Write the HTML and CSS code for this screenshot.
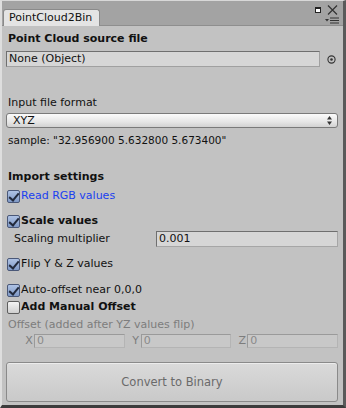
FILE: index.html
```html
<!DOCTYPE html>
<html>
<head>
<meta charset="utf-8">
<link rel="stylesheet" href="styles.css">
</head>
<body>
<div class="window">
  <div class="tabbar">
    <div class="tab">PointCloud2Bin</div>
    <div class="winicons">
      <svg class="maxic" width="6" height="6" viewBox="0 0 6 6"><rect x="0.5" y="0.5" width="5" height="5" fill="#fff" stroke="#222"/><rect x="0" y="0" width="6" height="2" fill="#222"/></svg>
      <svg class="closeic" width="11" height="10" viewBox="0 0 11 10"><path d="M1 0.5 L10 9.5 M10 0.5 L1 9.5" stroke="#333" stroke-width="1.2" fill="none"/></svg>
      <svg class="menuic" width="14" height="7" viewBox="0 0 14 7"><path d="M0 2 L4 2 L2 4.5 Z" fill="#333"/><path d="M5 1 H14 M5 3.5 H14 M5 6 H14" stroke="#333" stroke-width="1"/></svg>
    </div>
  </div>
  <div class="content">
    <div class="row h bold">Point Cloud source file</div>
    <div class="row objrow">
      <div class="objfield">None (Object)</div>
      <svg class="target" width="9" height="9" viewBox="0 0 9 9"><circle cx="4.5" cy="4.5" r="3.6" fill="none" stroke="#333" stroke-width="1.1"/><circle cx="4.5" cy="4.5" r="1.3" fill="#333"/></svg>
    </div>
    <div class="row fmt">Input file format</div>
    <div class="popup"><span>XYZ</span>
      <svg class="arrows" width="5" height="9" viewBox="0 0 5 9"><path d="M0 3.5 L2.5 0 L5 3.5 Z M0 5.5 L2.5 9 L5 5.5 Z" fill="#333"/></svg>
    </div>
    <div class="row sample">sample: "32.956900 5.632800 5.673400"</div>
    <div class="row h import bold">Import settings</div>
    <label class="row check rgb"><span class="box on"></span><span class="blue">Read RGB values</span></label>
    <label class="row check scale"><span class="box on"></span><span class="bold">Scale values</span></label>
    <div class="row mult">
      <span class="multlabel">Scaling multiplier</span>
      <div class="field multfield">0.001</div>
    </div>
    <label class="row check flip"><span class="box on"></span><span>Flip Y &amp; Z values</span></label>
    <label class="row check auto"><span class="box on"></span><span>Auto-offset near 0,0,0</span></label>
    <label class="row check manual"><span class="box"></span><span class="bold">Add Manual Offset</span></label>
    <div class="row offlabel gray">Offset (added after YZ values flip)</div>
    <div class="xyz">
      <span class="axis">X</span><div class="field dis">0</div>
      <span class="axis">Y</span><div class="field dis">0</div>
      <span class="axis">Z</span><div class="field dis">0</div>
    </div>
    <div class="button">Convert to Binary</div>
  </div>
</div>
</body>
</html>
```
FILE: styles.css
```css
html, body {
  margin: 0;
  padding: 0;
  background: #c2c2c2;
}
.window {
  width: 346px;
  height: 408px;
  box-sizing: border-box;
  font-family: "DejaVu Sans", Verdana, sans-serif;
  font-size: 11px;
  color: #111;
  background: #c2c2c2;
  border-left: 2px solid #dedede;
  border-top: 1px solid #d8d8d8;
  border-right: 3px solid #5a5a5a;
  border-bottom: 3px solid #3c3c3c;
  display: flex;
  flex-direction: column;
  overflow: hidden;
}
.tabbar {
  height: 24px;
  background: #a3a3a3;
  position: relative;
  display: flex;
  align-items: flex-end;
  border-bottom: 1px solid #8e8e8e;
}
.tab {
  margin-left: 1px;
  width: 97px;
  height: 17px;
  box-sizing: border-box;
  background: #e4e4e4;
  border: 1px solid #8a8a8a;
  border-bottom: none;
  border-radius: 3px 3px 0 0;
  font-size: 11px;
  line-height: 16px;
  padding-left: 5px;
  color: #111;
  margin-bottom: -1px;
  white-space: nowrap;
}
.winicons {
  position: absolute;
  right: 0;
  top: 0;
  width: 40px;
  height: 24px;
}
.maxic { position: absolute; left: 12px; top: 6px; }
.closeic { position: absolute; left: 24px; top: 4px; }
.menuic { position: absolute; left: 22px; top: 16px; }
.content {
  flex: 1;
  padding-left: 4px;
  padding-right: 0;
  display: flex;
  flex-direction: column;
}
.row {
  height: 16px;
  line-height: 16px;
  white-space: nowrap;
}
.bold { font-weight: bold; }
.h { margin-top: 5px; padding-left: 2px; }
.objrow { margin-top: 4px; display: flex; align-items: center; }
.objfield {
  width: 314px;
  height: 16px;
  box-sizing: border-box;
  background: #d6d6d6;
  border: 1px solid #6f6f6f;
  border-right-color: #a0a0a0;
  border-bottom-color: #a0a0a0;
  line-height: 14px;
  padding-left: 2px;
}
.target { margin-left: 7px; }
.fmt { margin-top: 28px; padding-left: 2px; }
.popup {
  margin-top: 2px;
  width: 332px;
  height: 15px;
  box-sizing: border-box;
  border: 1px solid #7a7a7a;
  border-radius: 3px;
  background: linear-gradient(#fbfbfb, #e6e6e6 60%, #d2d2d2);
  display: flex;
  align-items: center;
  justify-content: space-between;
  padding: 0 5px 0 6px;
  line-height: 13px;
}
.sample { margin-top: 5px; padding-left: 2px; font-size: 10.5px; height: 15px; line-height: 15px; }
.import { margin-top: 21px; }
.check { display: flex; align-items: center; padding-left: 1px; }
.box {
  width: 13px;
  height: 13px;
  box-sizing: border-box;
  border: 1px solid #5e5e5e;
  border-radius: 2px;
  background: linear-gradient(#f4f4f4, #cfcfcf);
  margin-right: 1px;
  position: relative;
  flex: none;
}
.box.on {
  background: linear-gradient(#aec2e4, #7f99c6);
  border-color: #4a5878;
}
.box.on::after {
  content: "";
  position: absolute;
  left: 3px;
  top: 0px;
  width: 4px;
  height: 8px;
  border-right: 2px solid #222a3c;
  border-bottom: 2px solid #222a3c;
  transform: rotate(40deg);
}
.blue { color: #1a3ff0; }
.rgb { margin-top: 3px; }
.scale { margin-top: 9px; }
.mult { margin-top: 2px; display: flex; align-items: center; }
.multlabel { width: 150px; box-sizing: border-box; padding-left: 8px; flex: none; }
.field {
  height: 16px;
  box-sizing: border-box;
  background: #d6d6d6;
  border: 1px solid #6f6f6f;
  border-right-color: #a6a6a6;
  border-bottom-color: #a6a6a6;
  line-height: 14px;
  padding-left: 2px;
}
.multfield { width: 182px; }
.flip { margin-top: 9px; }
.auto { margin-top: 10px; }
.manual { margin-top: 1px; }
.gray { color: #7d7d7d; }
.offlabel { margin-top: 3px; height: 14px; line-height: 14px; padding-left: 2px; }
.xyz {
  margin-top: 2px;
  height: 14px;
  display: flex;
  align-items: center;
  padding-left: 18px;
  width: 332px;
  box-sizing: border-box;
  color: #7d7d7d;
}
.axis { width: 10px; text-align: center; line-height: 14px; flex: none; }
.field.dis {
  flex: 1;
  height: 14px;
  line-height: 12px;
  background: #c8c8c8;
  border-color: #9a9a9a;
  border-right-color: #b4b4b4;
  border-bottom-color: #b4b4b4;
  color: #8a8a8a;
  margin-right: 6px;
}
.field.dis:last-child { margin-right: 0; }
.button {
  margin-top: 14px;
  width: 332px;
  height: 40px;
  box-sizing: border-box;
  border: 1px solid #8a8a8a;
  border-radius: 3px;
  background: linear-gradient(#dadada, #c9c9c9);
  box-shadow: inset 0 1px 0 #ececec;
  text-align: center;
  line-height: 38px;
  color: #6a6a6a;
  font-size: 11.5px;
}
```
